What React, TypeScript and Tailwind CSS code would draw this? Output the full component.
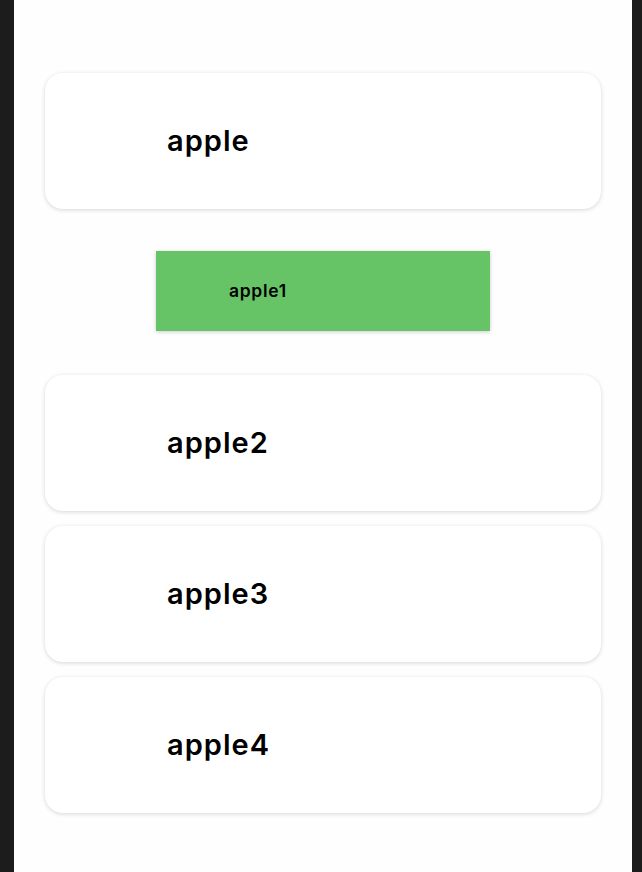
const items = ["apple2", "apple3", "apple4"];

function Card({ label }: { label: string }) {
  return (
    <div className="flex h-[136px] items-center rounded-[18px] bg-white pl-[122px] shadow-[0_1px_4px_rgba(0,0,0,0.16)]">
      <span className="text-[29px] font-semibold tracking-[0.035em] text-black">{label}</span>
    </div>
  );
}

export default function App() {
  return (
    <div className="flex h-[872px] bg-[#1c1c1c] pl-[14px] pr-[10px] font-['Inter',sans-serif]">
      <div className="flex-1 bg-[#fefefe] px-[31px] pt-[73px]">
        <Card label="apple" />
        <div className="mx-auto mt-[42px] flex h-[80px] w-[334px] items-center bg-[#66c466] pl-[73px] shadow-[0_1px_4px_rgba(0,0,0,0.2)]">
          <span className="text-[17.5px] font-semibold tracking-[0.04em] text-black">apple1</span>
        </div>
        <div className="mt-[44px] flex flex-col gap-[15px]">
          {items.map((label) => (
            <Card key={label} label={label} />
          ))}
        </div>
      </div>
    </div>
  );
}
